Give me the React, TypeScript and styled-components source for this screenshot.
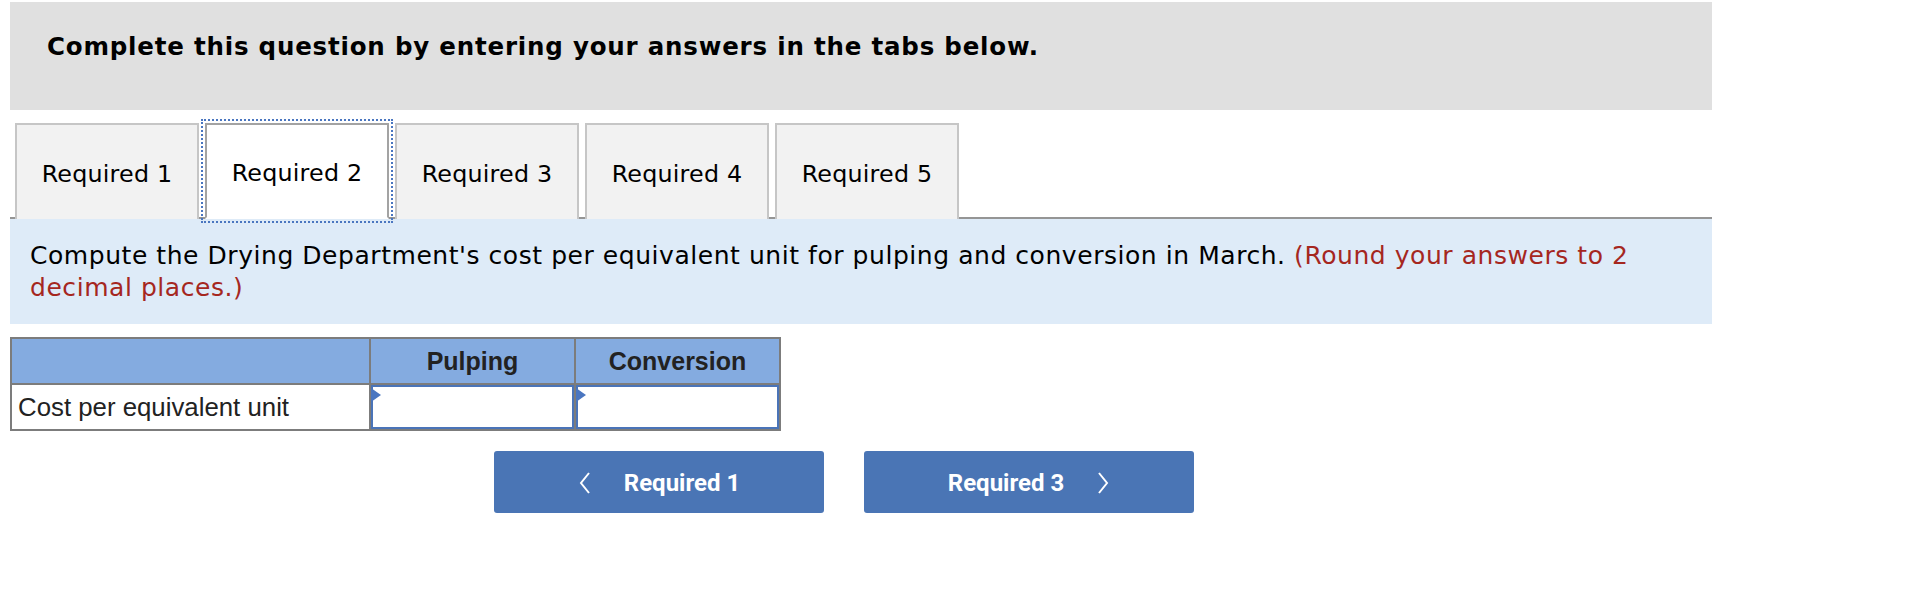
import React, { FC, useState } from 'react';
import styled, { createGlobalStyle } from 'styled-components';

const GlobalStyle = createGlobalStyle`
	html, body {
		margin: 0;
		padding: 0;
		background: #ffffff;
	}
	body {
		font-family: 'DejaVu Sans', Verdana, sans-serif;
		color: #000000;
	}
`;

const tabs = ['Required 1', 'Required 2', 'Required 3', 'Required 4', 'Required 5'];

const Chevron: FC<{ dir: 'left' | 'right' }> = ({ dir }) => (
	<svg width="14" height="24" viewBox="0 0 14 24" fill="none">
		<polyline
			points={dir === 'left' ? '11,2 3,12 11,22' : '3,2 11,12 3,22'}
			stroke="#ffffff"
			strokeWidth="2"
			strokeLinejoin="miter"
		/>
	</svg>
);

const App: FC = () => {
	const [active, setActive] = useState(1);

	return (
		<>
			<GlobalStyle />
			<Page>
				<Banner>Complete this question by entering your answers in the tabs below.</Banner>

				<TabBar>
					{tabs.map((label, idx) => (
						<Tab key={label} active={idx === active} onClick={() => setActive(idx)}>
							{label}
						</Tab>
					))}
				</TabBar>

				<Instructions>
					Compute the Drying Department's cost per equivalent unit for pulping and conversion in March.{' '}
					<Hint>(Round your answers to 2 decimal places.)</Hint>
				</Instructions>

				<AnswerTable>
					<thead>
						<tr>
							<HeadCell />
							<HeadCell>Pulping</HeadCell>
							<HeadCell>Conversion</HeadCell>
						</tr>
					</thead>
					<tbody>
						<tr>
							<LabelCell>Cost per equivalent unit</LabelCell>
							<InputCell>
								<Flag />
								<AnswerInput type="text" />
							</InputCell>
							<InputCell>
								<Flag />
								<AnswerInput type="text" />
							</InputCell>
						</tr>
					</tbody>
				</AnswerTable>

				<NavRow>
					<NavButton>
						<Chevron dir="left" />
						<span>Required 1</span>
					</NavButton>
					<NavButton>
						<span>Required 3</span>
						<Chevron dir="right" />
					</NavButton>
				</NavRow>
			</Page>
		</>
	);
};

export default App;

const Page = styled('div')`
	width: 1702px;
	padding: 2px 10px 0;
`;

const Banner = styled('div')`
	height: 108px;
	box-sizing: border-box;
	padding: 29px 37px 0;
	background: #e0e0e0;
	font-weight: bold;
	font-size: 24.5px;
	letter-spacing: 0.8px;
	line-height: 32px;
`;

const TabBar = styled('div')`
	display: flex;
	gap: 6px;
	margin-top: 13px;
	padding-left: 5px;
	border-bottom: 2px solid #959595;
`;

const Tab = styled('div')<{ active: boolean }>`
	width: 184px;
	height: 96px;
	box-sizing: border-box;
	display: flex;
	align-items: center;
	justify-content: center;
	padding-top: 4px;
	margin-bottom: -2px;
	border: 2px solid ${(p) => (p.active ? '#a3a3a3' : '#c6c6c6')};
	border-bottom: ${(p) => (p.active ? '2px solid #ffffff' : 'none')};
	background: ${(p) => (p.active ? '#ffffff' : '#f2f2f2')};
	outline: ${(p) => (p.active ? '2px dotted #4a76c0' : 'none')};
	outline-offset: 2px;
	font-size: 23.8px;
	letter-spacing: 0.2px;
	cursor: pointer;
`;

const Instructions = styled('div')`
	background: #deebf8;
	padding: 21px 40px 20px 20px;
	font-size: 25px;
	letter-spacing: 0.55px;
	line-height: 32px;
`;

const Hint = styled('span')`
	color: #a5271f;
`;

const AnswerTable = styled('table')`
	margin-top: 13px;
	border-collapse: collapse;
	font-family: 'Liberation Sans', Arial, sans-serif;
	border: 2px solid #7c7c7c;
`;

const HeadCell = styled('th')`
	height: 44px;
	padding: 0;
	background: #84abe0;
	border: 2px solid #7c7c7c;
	font-size: 25px;
	font-weight: bold;
	color: #222222;
	text-align: center;
	&:nth-child(1) {
		width: 357px;
	}
	&:nth-child(2) {
		width: 203px;
	}
	&:nth-child(3) {
		width: 203px;
	}
`;

const LabelCell = styled('td')`
	height: 44px;
	padding: 0 0 0 6px;
	border: 2px solid #7c7c7c;
	font-size: 25.8px;
	color: #222222;
`;

const InputCell = styled('td')`
	position: relative;
	height: 44px;
	padding: 0;
	border: 2px solid #7c7c7c;
`;

const Flag = styled('span')`
	position: absolute;
	top: 3px;
	left: 0;
	width: 0;
	height: 0;
	border-top: 7px solid transparent;
	border-bottom: 7px solid transparent;
	border-left: 10px solid #4a76c0;
`;

const AnswerInput = styled('input')`
	display: block;
	width: 100%;
	height: 44px;
	box-sizing: border-box;
	margin: 0;
	border: 2px solid #4a74b8;
	outline: none;
	background: #ffffff;
	font-size: 22px;
`;

const NavRow = styled('div')`
	display: flex;
	justify-content: center;
	gap: 40px;
	margin-top: 20px;
	padding-right: 34px;
`;

const NavButton = styled('button')`
	width: 330px;
	height: 62px;
	display: flex;
	align-items: center;
	justify-content: center;
	gap: 32px;
	padding-top: 2px;
	border: none;
	border-radius: 3px;
	background: #4a75b5;
	color: #ffffff;
	font-family: Roboto, 'Liberation Sans', sans-serif;
	font-weight: bold;
	font-size: 24px;
	cursor: pointer;
`;
